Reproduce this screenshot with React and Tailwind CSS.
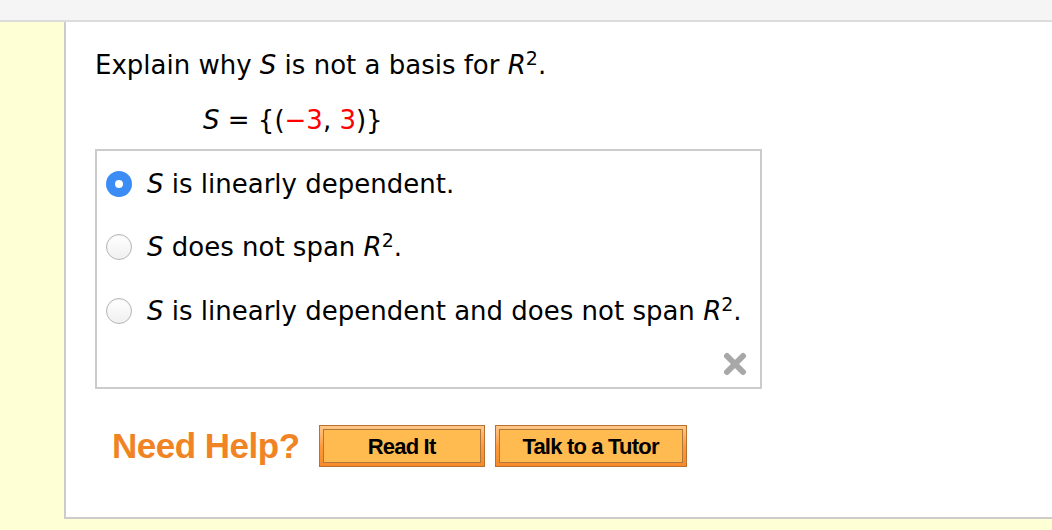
import React from 'react';

function Radio({ checked }) {
  if (checked) {
    return (
      <span className="flex size-[26px] shrink-0 items-center justify-center rounded-full bg-[#3b8cf5]">
        <span className="size-[8px] rounded-full bg-white"></span>
      </span>
    );
  }
  return (
    <span className="size-[26px] shrink-0 rounded-full border border-[#b5b5b5] bg-gradient-to-b from-white to-[#f0f0f0] shadow-[inset_0_1px_1px_rgba(0,0,0,0.05)]"></span>
  );
}

function OrangeButton({ children, width }) {
  return (
    <button className={`h-[42px] ${width} border border-[#b8702c] bg-gradient-to-b from-[#ffc88a] via-[#ff9a3c] to-[#f58a2a] p-[3px]`}>
      <span className="flex h-full w-full items-center justify-center border border-[#b0773a] bg-[#ffbb4f] text-[22px] font-bold tracking-[-0.8px] text-black [font-family:'Liberation_Sans',Arial,sans-serif]">
        {children}
      </span>
    </button>
  );
}

export default function App() {
  return (
    <div className="flex h-[530px] w-[1052px] flex-col bg-[#ffffd6] [font-family:'DejaVu_Sans',Verdana,sans-serif]">
      <div className="h-[22px] shrink-0 border-b-2 border-[#dcdcdc] bg-[#f5f5f5]"></div>
      <div className="flex h-[497px] shrink-0">
        <div className="w-[64px] shrink-0"></div>
        <div className="flex-1 border-b-2 border-l-2 border-[#cccccc] bg-white pl-[29px] pt-[28px]">
          <p className="text-[26px] leading-[30px] text-black">
            Explain why <i>S</i> is not a basis for <i>R</i><sup className="text-[19px]">2</sup>.
          </p>
          <p className="mt-[25px] pl-[108px] text-[26px] leading-[30px] text-black">
            <i>S</i> = {'{'}(<span className="text-[#ff0000]">−3</span>, <span className="text-[#ff0000]">3</span>){'}'}
          </p>
          <div className="mt-[14px] flex h-[240px] w-[667px] flex-col border-2 border-[#cccccc] pl-[9px] pt-[18px]">
            <label className="flex h-[30px] items-center gap-[15px] text-[26px] leading-[30px]">
              <Radio checked />
              <span><i>S</i> is linearly dependent.</span>
            </label>
            <label className="mt-[33px] flex h-[30px] items-center gap-[15px] text-[26px] leading-[30px]">
              <Radio />
              <span><i>S</i> does not span <i>R</i><sup className="text-[19px]">2</sup>.</span>
            </label>
            <label className="mt-[34px] flex h-[30px] items-center gap-[15px] text-[26px] leading-[30px]">
              <Radio />
              <span><i>S</i> is linearly dependent and does not span <i>R</i><sup className="text-[19px]">2</sup>.</span>
            </label>
            <div className="mt-[25px] flex justify-end pr-[12px]">
              <svg width="26" height="26" viewBox="0 0 26 26">
                <path d="M5 5 L21 21 M21 5 L5 21" stroke="#a8a8a8" strokeWidth="6" strokeLinecap="round" />
              </svg>
            </div>
          </div>
          <div className="mt-[36px] flex h-[42px] items-center pl-[17px]">
            <span className="mr-[19px] text-[35px] font-bold tracking-[-0.5px] text-[#f08424] [font-family:'Liberation_Sans',Arial,sans-serif]">
              Need Help?
            </span>
            <OrangeButton width="w-[166px]">Read It</OrangeButton>
            <span className="w-[10px]"></span>
            <OrangeButton width="w-[192px]">Talk to a Tutor</OrangeButton>
          </div>
        </div>
      </div>
    </div>
  );
}
